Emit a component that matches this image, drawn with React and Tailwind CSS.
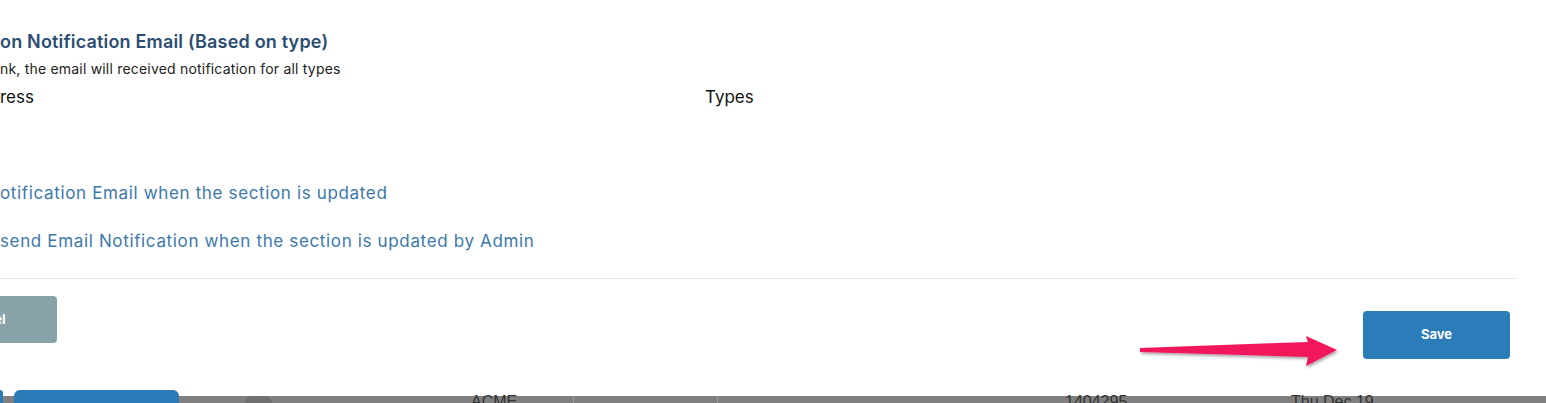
import React from 'react';

const font = { fontFamily: 'Inter, "Open Sans", sans-serif' };
const tableFont = { fontFamily: '"Liberation Sans", Arial, sans-serif' };

function Arrow() {
  return (
    <svg width="220" height="50" viewBox="1130 325 220 50" className="block">
      <defs>
        <filter id="sh" x="-10%" y="-40%" width="120%" height="180%">
          <feDropShadow dx="1" dy="2" stdDeviation="1.5" floodColor="#000" floodOpacity="0.35" />
        </filter>
      </defs>
      <polygon
        points="1140,348 1308,342 1306,336 1337,350 1306,366 1308,357 1140,352"
        fill="#f2175a"
        filter="url(#sh)"
      />
    </svg>
  );
}

export default function App() {
  return (
    <div className="flex flex-col w-[1546px] h-[403px] overflow-hidden bg-white" style={font}>
      <div className="pt-[30px] flex-1">
        <h2 className="text-[18px] leading-6 font-semibold tracking-[0.01em] text-[#2c4d73] whitespace-nowrap">
          on Notification Email (Based on type)
        </h2>
        <p className="mt-[6px] text-[14px] leading-[18px] tracking-[0.014em] text-[#222] whitespace-nowrap">
          nk, the email will received notification for all types
        </p>
        <div className="mt-[7px] flex text-[17px] leading-6 text-[#111]">
          <div className="w-[705px]">ress</div>
          <div>Types</div>
        </div>

        <div className="mt-[72px] flex flex-col gap-6 text-[17px] leading-6 tracking-[0.038em] text-[#3b78ab] whitespace-nowrap">
          <div>otification Email when the section is updated</div>
          <div>send Email Notification when the section is updated by Admin</div>
        </div>

        <div className="mt-[25px] w-[1515px] border-t border-[#e3e3e3]" />

        <div className="flex items-start w-[1510px]">
          <button className="mt-[17px] -ml-[90px] w-[147px] h-[47px] rounded-[4px] bg-[#87a3a9] text-white text-[13px] font-bold">
            Cancel
          </button>
          <div className="flex-1 flex justify-end items-start">
            <div className="mt-[46px] mr-[13px]">
              <Arrow />
            </div>
            <button className="mt-[32px] w-[147px] h-[48px] rounded-[4px] bg-[#2a7db9] text-white text-[13px] font-bold">
              Save
            </button>
          </div>
        </div>
      </div>

      <div
        className="h-[13px] flex items-start text-[16px] leading-5 text-[#333] bg-[linear-gradient(to_bottom,#fff_6px,#808080_6px)]"
        style={tableFont}
      >
        <div className="w-[3px] h-[13px] rounded-tr-[3px] bg-[#2a7ab8]" />
        <div className="ml-[11px] w-[165px] h-[13px] rounded-t-[6px] bg-[#2a7ab8]" />
        <div className="ml-[66px] mt-[6px] w-[27px] h-[14px] rounded-full bg-[#707070]" />
        <div className="ml-[199px] mt-[2px] w-[102px]">ACME</div>
        <div className="mt-[6px] w-[144px] h-[7px] border-l border-[#9a9a9a]" />
        <div className="mt-[6px] w-[348px] h-[7px] border-l border-[#9a9a9a]" />
        <div className="mt-[2px] w-[226px]">1404295</div>
        <div className="mt-[2px]">Thu Dec 19</div>
      </div>
    </div>
  );
}
